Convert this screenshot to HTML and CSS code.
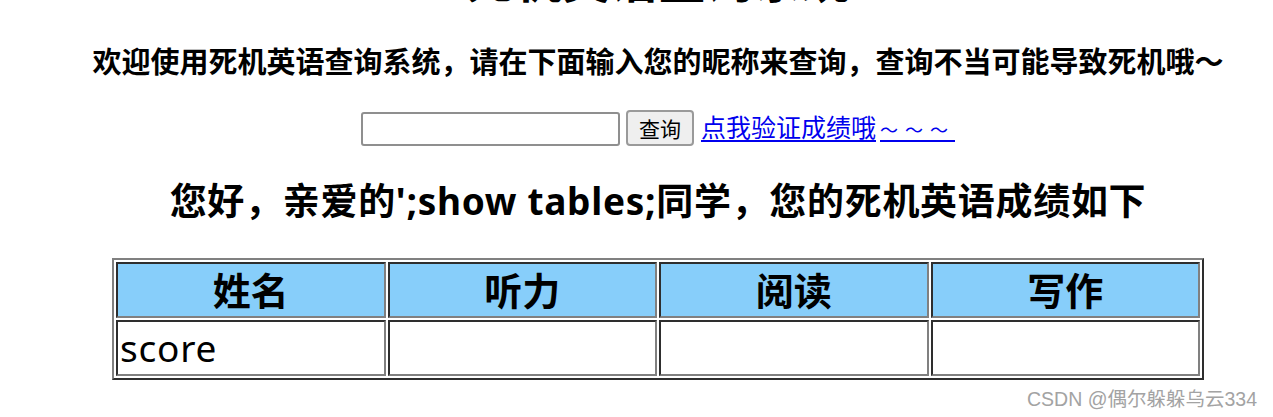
FILE: index.html
```html
<!DOCTYPE html>
<html lang="zh-CN">
<head>
<meta charset="utf-8">
<title>死机英语查询系统</title>
<link rel="stylesheet" href="styles.css">
</head>
<body>
<div class="page">
  <h1 class="title">死机英语查询系统</h1>
  <h3 class="welcome">欢迎使用死机英语查询系统，请在下面输入您的昵称来查询，查询不当可能导致死机哦～</h3>
  <form class="search" onsubmit="return false">
    <input class="search-input" type="text" name="name">
    <button class="search-btn" type="submit">查询</button>
    <a class="verify-link" href="#">点我验证成绩哦<span class="tilde">～～～</span></a>
  </form>
  <h2 class="greet">您好，亲爱的';show tables;同学，您的死机英语成绩如下</h2>
  <table class="scores">
    <tr>
      <th>姓名</th>
      <th>听力</th>
      <th>阅读</th>
      <th>写作</th>
    </tr>
    <tr>
      <td>score</td>
      <td></td>
      <td></td>
      <td></td>
    </tr>
  </table>
</div>
<div class="watermark">CSDN @偶尔躲躲乌云334</div>
</body>
</html>
```

FILE: styles.css
```css
html, body {
  margin: 0;
  padding: 0;
  background: #ffffff;
  overflow: hidden;
}

body {
  font-family: "Noto Sans", "Noto Sans CJK SC", sans-serif;
  color: #000;
  height: 417px;
  position: relative;
}

.page {
  padding-left: 43px;
  text-align: center;
}

.title {
  margin: -44px 0 0;
  font-size: 48px;
  line-height: 48px;
  height: 48px;
  font-weight: bold;
}

.welcome {
  margin: 38px 0 0;
  font-size: 29px;
  line-height: 40px;
  font-weight: bold;
}

.search {
  margin: 28px 0 0;
  height: 36px;
  display: flex;
  justify-content: center;
  align-items: flex-end;
}

.search-input {
  box-sizing: border-box;
  width: 259px;
  height: 34px;
  border: 2px solid #8f8f8f;
  border-radius: 3px;
  margin: 0;
  padding: 0 4px;
  font-size: 20px;
}

.search-btn {
  box-sizing: border-box;
  width: 68px;
  height: 36px;
  margin: 0 0 0 6px;
  padding: 0;
  background: #efefef;
  border: 2px solid #9a9a9a;
  border-radius: 4px;
  font-family: "Noto Sans CJK SC", sans-serif;
  font-size: 21px;
  line-height: 30px;
  color: #000;
}

.verify-link {
  margin-left: 7px;
  font-family: "Noto Sans CJK SC", sans-serif;
  font-size: 25px;
  line-height: 34px;
  color: #0000ee;
  text-decoration: underline;
  text-underline-offset: 3px;
}

.tilde {
  font-size: 18px;
  letter-spacing: 7px;
  padding-left: 4px;
}

.greet {
  margin: 31px 0 0;
  font-size: 37px;
  line-height: 48px;
  font-weight: bold;
  letter-spacing: 0.7px;
}

.scores {
  margin: 33px auto 0;
  width: 1092px;
  border-collapse: separate;
  border-spacing: 2px;
  border-style: solid;
  border-width: 2px;
  border-color: #808080 #2e2e2e #2e2e2e #808080;
  font-size: 36px;
  table-layout: fixed;
}

.scores th,
.scores td {
  border-style: solid;
  border-width: 2px;
  border-color: #2e2e2e #808080 #808080 #2e2e2e;
  height: 52px;
  padding: 0 2px;
  line-height: 52px;
  box-sizing: content-box;
}

.scores th {
  background: #87cefa;
  font-weight: bold;
  font-size: 38px;
  text-align: center;
}

.scores td {
  background: #fff;
  text-align: left;
  font-weight: normal;
  font-size: 37px;
  letter-spacing: 0.8px;
}

.watermark {
  position: absolute;
  right: 16px;
  top: 387px;
  font-family: "Liberation Sans", "Noto Sans CJK SC", sans-serif;
  font-size: 19.5px;
  line-height: 24px;
  color: #a3a3a3;
}
```
